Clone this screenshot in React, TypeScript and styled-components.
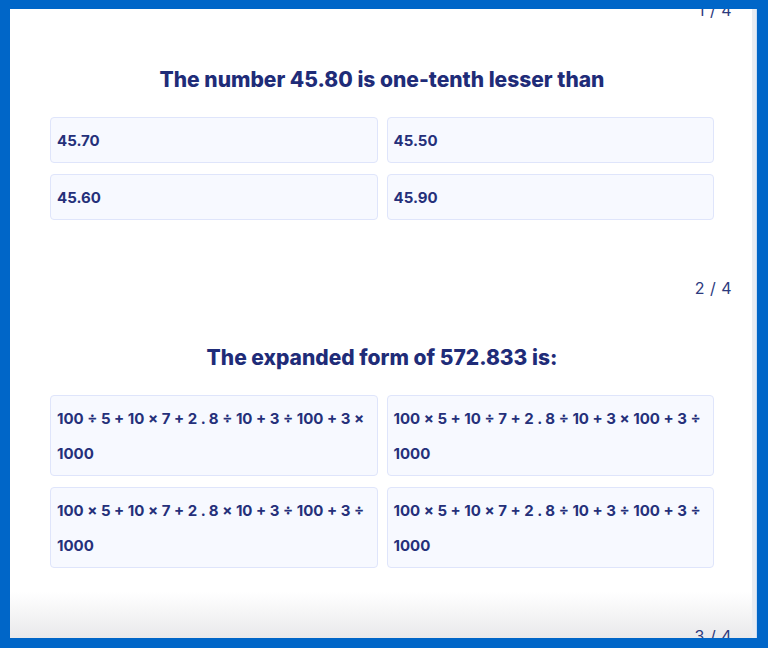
import React from "react";
import styled, { createGlobalStyle } from "styled-components";

const GlobalStyle = createGlobalStyle`
  html, body {
    margin: 0;
    padding: 0;
    background: #0066c8;
  }
  body {
    font-family: Inter, "Noto Sans", sans-serif;
  }
`;

interface Question {
  title: string;
  options: string[];
}

const questions: Question[] = [
  {
    title: "The number 45.80 is one-tenth lesser than",
    options: ["45.70", "45.50", "45.60", "45.90"],
  },
  {
    title: "The expanded form of 572.833 is:",
    options: [
      "100 ÷ 5 + 10 × 7 + 2 . 8 ÷ 10 + 3 ÷ 100 + 3 × 1000",
      "100 × 5 + 10 ÷ 7 + 2 . 8 ÷ 10 + 3 × 100 + 3 ÷ 1000",
      "100 × 5 + 10 × 7 + 2 . 8 × 10 + 3 ÷ 100 + 3 ÷ 1000",
      "100 × 5 + 10 × 7 + 2 . 8 ÷ 10 + 3 ÷ 100 + 3 ÷ 1000",
    ],
  },
  {
    title: "Which of the following is the greatest?",
    options: ["0.45", "0.405", "0.5", "0.045"],
  },
];

const Frame = styled.div`
  box-sizing: border-box;
  width: 768px;
  height: 648px;
  padding: 9px 11px 10px 10px;
  background: #0066c8;
`;

// the window fades to grey at the bottom edge, behind the scrolled content
const Window = styled.div`
  display: flex;
  height: 100%;
  overflow: hidden;
  background: linear-gradient(
    to bottom,
    #ffffff 0%,
    #ffffff calc(100% - 46px),
    #e9e9eb 100%
  );
`;

// scroll area, already scrolled a few pixels past the first counter
const Scroller = styled.div`
  flex: 1;
  overflow: hidden;
`;

const ScrollContent = styled.div`
  margin-top: -9px;
`;

const Rail = styled.div`
  width: 4px;
  background: #e8ecf2;
  border-right: 1px solid #c9dcf2;
`;

const Section = styled.section`
  padding: 0 38px 58px 40px;
`;

const Counter = styled.div`
  text-align: right;
  margin-right: -18px;
  font-size: 16px;
  line-height: 20px;
  color: #2d3a7e;
  letter-spacing: 0.5px;
`;

const Title = styled.h2`
  margin: 46px 0 23px;
  text-align: center;
  font-size: 21px;
  line-height: 28px;
  font-weight: 800;
  color: #1f2c78;
`;

const OptionGrid = styled.div`
  display: grid;
  grid-template-columns: 1fr 1fr;
  column-gap: 9px;
  row-gap: 11px;
`;

const Option = styled.div`
  padding: 5px 6px 4px;
  border: 1px solid #dfe5fb;
  border-radius: 4px;
  background: #f7f9ff;
  font-size: 15px;
  line-height: 35px;
  font-weight: 700;
  color: #25307a;
`;

const App = (): JSX.Element => {
  return (
    <>
      <GlobalStyle />
      <Frame>
        <Window>
          <Scroller>
            <ScrollContent>
              {questions.map((q, i) => (
                <Section key={q.title}>
                  <Counter>
                    {i + 1} / 4
                  </Counter>
                  <Title>{q.title}</Title>
                  <OptionGrid>
                    {q.options.map((opt) => (
                      <Option key={opt}>{opt}</Option>
                    ))}
                  </OptionGrid>
                </Section>
              ))}
            </ScrollContent>
          </Scroller>
          <Rail />
        </Window>
      </Frame>
    </>
  );
};

export default App;
